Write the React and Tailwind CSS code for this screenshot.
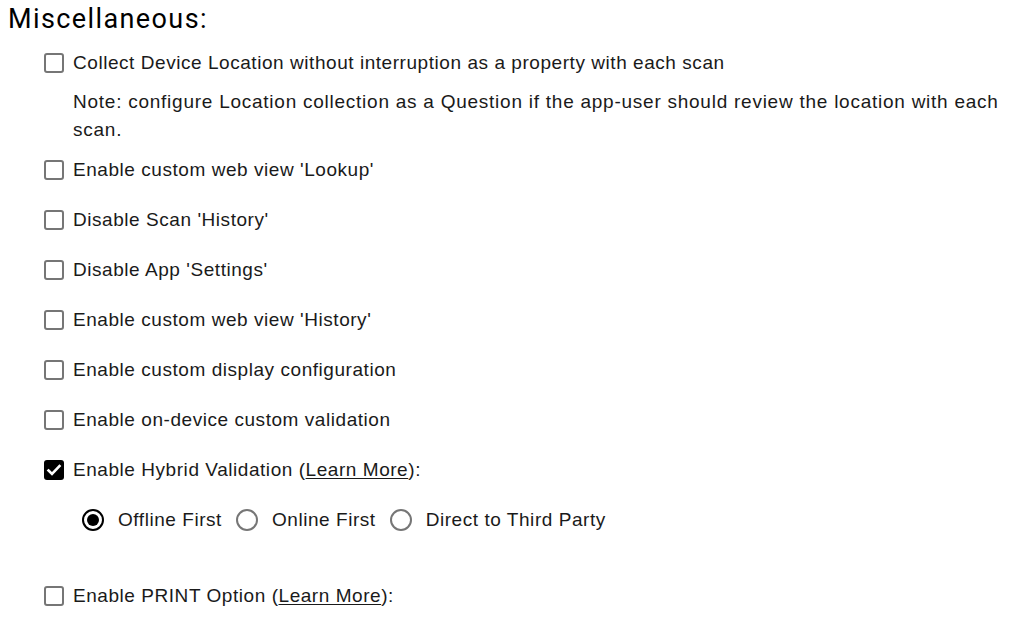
import React from "react";

const OPTIONS = [
  "Enable custom web view 'Lookup'",
  "Disable Scan 'History'",
  "Disable App 'Settings'",
  "Enable custom web view 'History'",
  "Enable custom display configuration",
  "Enable on-device custom validation",
];

function Checkbox({ checked }) {
  if (checked) {
    return (
      <span className="w-[20px] h-[20px] rounded-[3px] bg-black flex items-center justify-center shrink-0">
        <svg width="16" height="16" viewBox="0 0 16 16" fill="none">
          <path d="M2.5 8.5l3.5 3.5 7.5-8" stroke="white" strokeWidth="2.6" strokeLinecap="square" />
        </svg>
      </span>
    );
  }
  return <span className="w-[20px] h-[20px] rounded-[3px] border-2 border-[#767676] bg-white shrink-0" />;
}

function Radio({ checked }) {
  if (checked) {
    return (
      <span className="w-[22px] h-[22px] rounded-full border-2 border-black flex items-center justify-center shrink-0">
        <span className="w-[12px] h-[12px] rounded-full bg-black" />
      </span>
    );
  }
  return <span className="w-[22px] h-[22px] rounded-full border-2 border-[#767676] shrink-0" />;
}

function Row({ checked, children }) {
  return (
    <div className="h-[50px] flex items-center gap-[9px]">
      <Checkbox checked={checked} />
      <span>{children}</span>
    </div>
  );
}

export default function App() {
  return (
    <div className="w-[1024px] h-[628px] bg-white text-[#1a1a1a] overflow-hidden font-['Liberation_Sans',Arial,sans-serif] text-[19px] tracking-[0.55px]">
      <h2 className="h-[38px] pl-[8px] flex items-center font-['Roboto',sans-serif] text-[27px] tracking-[1.4px] leading-none text-black">
        Miscellaneous:
      </h2>
      <div className="pl-[44px]">
        <Row>Collect Device Location without interruption as a property with each scan</Row>
        <p className="pl-[29px] w-[975px] leading-[28px] tracking-[0.75px] mb-px">
          Note: configure Location collection as a Question if the app-user should review the location with each scan.
        </p>
        {OPTIONS.map((o) => (
          <Row key={o}>{o}</Row>
        ))}
        <Row checked>
          Enable Hybrid Validation (<span className="underline underline-offset-2">Learn More</span>):
        </Row>
        <div className="h-[50px] flex items-center pl-[38px] gap-[14px]">
          {["Offline First", "Online First", "Direct to Third Party"].map((r, i) => (
            <label key={r} className="flex items-center gap-[14px]">
              <Radio checked={i === 0} />
              <span>{r}</span>
            </label>
          ))}
        </div>
        <div className="h-[26px]" />
        <Row>
          Enable PRINT Option (<span className="underline underline-offset-2">Learn More</span>):
        </Row>
      </div>
    </div>
  );
}
